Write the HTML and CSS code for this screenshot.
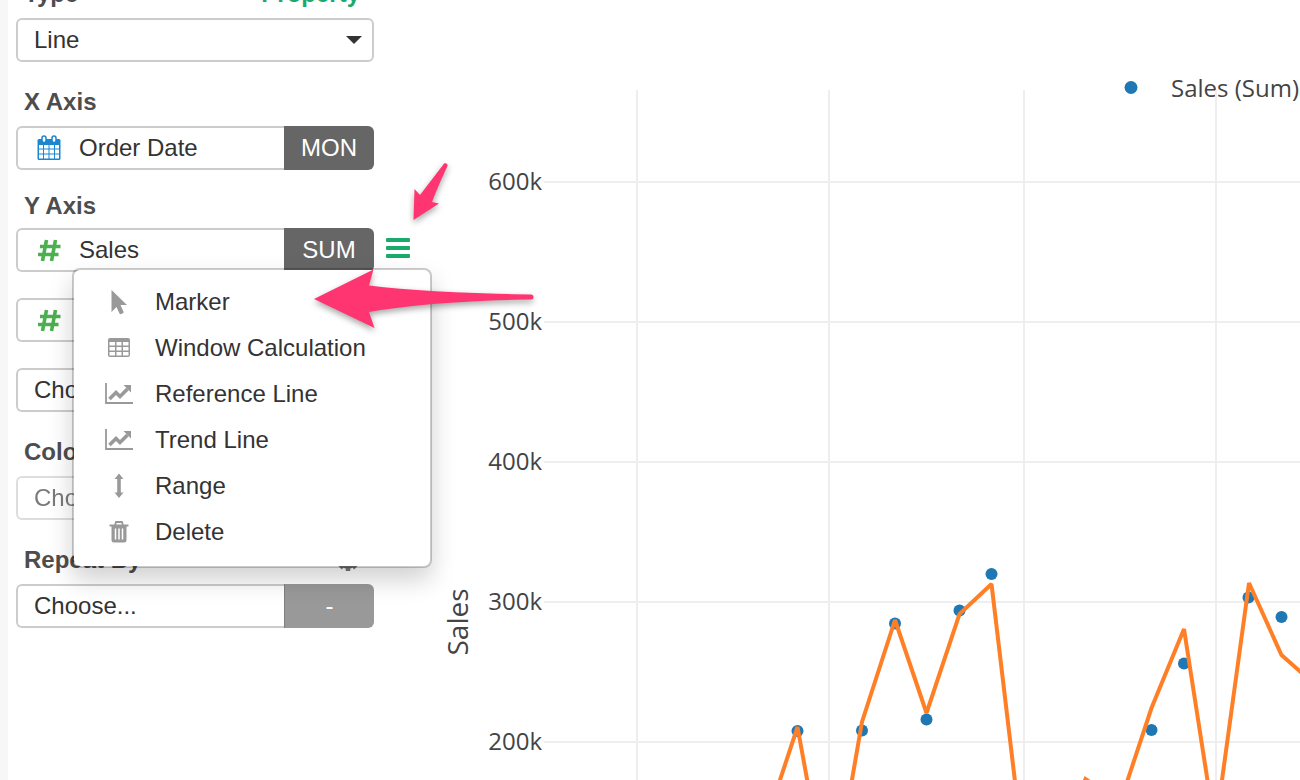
FILE: index.html
```html
<!DOCTYPE html>
<html lang="en">
<head>
<meta charset="utf-8">
<title>Chart settings</title>
<link rel="stylesheet" href="styles.css">
</head>
<body>
<svg class="defs" aria-hidden="true">
  <symbol id="i-hash" viewBox="0 0 24 24"><path d="M9.500 2L5.500 23M18.500 2L14.500 23M3 8.500H23.500M1 16.500H21.500" fill="none" stroke="currentColor" stroke-width="3.600"/></symbol>
  <symbol id="i-trend" viewBox="0 0 28 22"><path d="M1 0V20H28" fill="none" stroke="currentColor" stroke-width="1.800"/><path d="M4.500 16L11 9.500L15 13.500L22.500 6" fill="none" stroke="currentColor" stroke-width="3.600"/><path d="M18.500 2H26V9.500Z" fill="currentColor"/></symbol>
</svg>
<main class="app">
  <form class="panel">
    <div class="head">
      <label class="label" for="type">Type</label>
      <a class="property" href="#">Property</a>
    </div>
    <div class="field">
      <select class="value" id="type"><option>Line</option></select>
      <svg class="caret" viewBox="0 0 16 8" aria-hidden="true"><path d="M0 0H16L8 8Z"/></svg>
    </div>

    <div class="head"><span class="label">X Axis</span></div>
    <div class="field">
      <button class="value" type="button">
        <svg class="icon blue" viewBox="0 0 24 24" aria-hidden="true">
          <path d="M2 3H22Q23.500 3 23.500 4.500V22.500Q23.500 24 22 24H2Q.5 24 .5 22.500V4.500Q.5 3 2 3Z" fill="currentColor"/>
          <path d="M2 9H6V12.500H2ZM7 9H11.500V12.500H7ZM12.500 9H17V12.500H12.500ZM18 9H22V12.500H18ZM2 13.500H6V17.500H2ZM7 13.500H11.500V17.500H7ZM12.500 13.500H17V17.500H12.500ZM18 13.500H22V17.500H18ZM2 18.500H6V22.500H2ZM7 18.500H11.500V22.500H7ZM12.500 18.500H17V22.500H12.500ZM18 18.500H22V22.500H18Z" fill="#fff"/>
          <rect x="5" y="0" width="4" height="6.500" rx="2" fill="#fff" stroke="currentColor" stroke-width="1.500"/>
          <rect x="15" y="0" width="4" height="6.500" rx="2" fill="#fff" stroke="currentColor" stroke-width="1.500"/>
        </svg>
        Order Date
      </button>
      <button class="agg" type="button">MON</button>
    </div>

    <div class="head head-y"><span class="label">Y Axis</span></div>
    <div class="field">
      <button class="value" type="button"><svg class="icon green" aria-hidden="true"><use href="#i-hash"/></svg>Sales</button>
      <button class="agg" type="button">SUM</button>
      <button class="burger" type="button" aria-label="Series menu"><i></i><i></i><i></i></button>
      <div class="menu" role="menu">
        <button class="item" type="button" role="menuitem">
          <svg class="mark" viewBox="0 0 28 28" aria-hidden="true"><path d="M6.500 2V24L11.500 19L14.500 25.500Q15 26.500 16 26L18 25.200Q19 24.800 18.500 23.800L15.500 17H22Z" fill="currentColor"/></svg>
          Marker
        </button>
        <button class="item" type="button" role="menuitem">
          <svg class="mark" viewBox="0 0 28 28" aria-hidden="true"><rect x="3" y="4" width="22" height="19" rx="2" fill="currentColor"/><path d="M4.500 8H10V11.500H4.500ZM11.500 8H16.500V11.500H11.500ZM18 8H23.500V11.500H18ZM4.500 13H10V16.500H4.500ZM11.500 13H16.500V16.500H11.500ZM18 13H23.500V16.500H18ZM4.500 18H10V21.500H4.500ZM11.500 18H16.500V21.500H11.500ZM18 18H23.500V21.500H18Z" fill="#fff"/></svg>
          Window Calculation
        </button>
        <button class="item" type="button" role="menuitem"><svg class="mark" aria-hidden="true"><use href="#i-trend"/></svg>Reference Line</button>
        <button class="item" type="button" role="menuitem"><svg class="mark" aria-hidden="true"><use href="#i-trend"/></svg>Trend Line</button>
        <button class="item" type="button" role="menuitem">
          <svg class="mark" viewBox="0 0 28 28" aria-hidden="true"><path d="M14 1.500L18.500 7H15.800V20.500H18.500L14 26L9.500 20.500H12.200V7H9.500Z" fill="currentColor"/></svg>
          Range
        </button>
        <button class="item" type="button" role="menuitem">
          <svg class="mark" viewBox="0 0 28 28" aria-hidden="true"><path d="M4.500 7.500H23.500M10 7.500L11 4H17L18 7.500" fill="none" stroke="currentColor" stroke-width="1.800"/><path d="M6.500 7H21.500V22Q21.500 24.500 19 24.500H9Q6.500 24.500 6.500 22Z" fill="currentColor"/><path d="M10.500 10.500V21.500M14 10.500V21.500M17.500 10.500V21.500" stroke="#fff" stroke-width="1.500"/></svg>
          Delete
        </button>
      </div>
    </div>
    <div class="field stacked">
      <button class="value" type="button"><svg class="icon green" aria-hidden="true"><use href="#i-hash"/></svg></button>
      <button class="agg" type="button">SUM</button>
    </div>
    <div class="field stacked">
      <button class="value" type="button">Choose...</button>
      <button class="agg muted" type="button">-</button>
    </div>

    <div class="head"><span class="label">Color By</span></div>
    <div class="field faded">
      <button class="value" type="button">Choose...</button>
      <button class="agg muted" type="button">-</button>
    </div>

    <div class="head">
      <span class="label">Repeat By</span>
      <svg class="gear" viewBox="0 0 24 24" aria-hidden="true"><circle cx="12" cy="12" r="6.500" fill="none" stroke="currentColor" stroke-width="5"/><path d="M12 1V5M12 19V23M1 12H5M19 12H23M4.200 4.200L7 7M17 17L19.800 19.800M19.800 4.200L17 7M4.200 19.800L7 17" stroke="currentColor" stroke-width="4.500"/></svg>
    </div>
    <div class="field">
      <button class="value" type="button">Choose...</button>
      <button class="agg muted" type="button">-</button>
    </div>
  </form>

  <svg class="chart" viewBox="440 0 860 780" preserveAspectRatio="xMinYMin slice" role="img" aria-label="Sales by order date">
    <g class="ticks"><text x="1299" y="97">Sales (Sum)</text></g>
    <g class="grid">
      <path d="M544 182H1300M544 322H1300M544 462H1300M544 602H1300M544 742H1300"/>
      <path d="M637 90V780M829 90V780M1024 90V780M1216 90V780"/>
    </g>
    <g class="dots">
      <circle cx="797.500" cy="731" r="6"/><circle cx="862" cy="730.500" r="6"/><circle cx="895" cy="623.500" r="6"/><circle cx="926.500" cy="719.500" r="6"/><circle cx="959.500" cy="610.500" r="6"/><circle cx="991.500" cy="574" r="6"/><circle cx="1151.500" cy="730" r="6"/><circle cx="1184" cy="663.500" r="6"/><circle cx="1248.500" cy="597.500" r="6"/><circle cx="1281.500" cy="617" r="6"/>
      <circle cx="1131" cy="87.500" r="6.500"/>
    </g>
    <path class="line" d="M765 820L780 780L797.500 727L809 790L830 880L845 820L862 722L895 620L926.500 713L959.500 614L991.500 584L1016 790L1040 880L1060 840L1085.500 779L1110 796L1118 810L1127 782L1151.500 708L1184 629L1209 790L1216 840L1222 780L1249 583L1281.500 655L1312 682"/>
    <g class="ticks">
      <text x="542" y="190">600k</text><text x="542" y="330">500k</text><text x="542" y="470">400k</text><text x="542" y="610">300k</text><text x="542" y="750">200k</text>
    </g>
    <text class="title" transform="translate(468 622) rotate(-90)">Sales</text>
  </svg>

  <svg class="arrows" viewBox="0 0 240 180" aria-hidden="true">
    <path d="M141.500 70L142.500 39L148 45Q158 32 171 15A1.500 1.500 0 0 1 175.500 16Q166 36 160 52L167 53.500Z"/>
    <path d="M42 149L101.500 119.500L97 135.500Q158 143 259 144.500A2.200 2.200 0 0 1 259 149.500Q158 151 97 162L102.500 178Z"/>
  </svg>
</main>
</body>
</html>
```
FILE: styles.css
```css
* { box-sizing: border-box; }
body { margin: 0; background: #fff; color: #333; font: 24px/28px "Liberation Sans", Arial, sans-serif; }
button, select { font: inherit; color: inherit; background: none; border: 0; margin: 0; padding: 0; text-align: left; }
.defs { position: absolute; width: 0; height: 0; }
.app { position: relative; display: flex; height: 100vh; overflow: hidden; border-left: 8px solid #f7f7f7; }

.panel { flex: none; width: 366px; margin-top: -46px; padding-left: 8px; }
.head { display: flex; justify-content: space-between; align-items: center; height: 64px; padding: 26px 14px 10px 8px; }
.head-y { height: 58px; padding-top: 22px; padding-bottom: 8px; }
.label { color: #4d4d4d; font-weight: bold; }
.property { color: #1aaa6b; font-weight: bold; text-decoration: none; }
.gear { width: 24px; height: 24px; color: #777; }

.field { position: relative; display: flex; height: 44px; }
.stacked { margin-top: 26px; }
.faded { opacity: 0.65; }
.value { flex: 1; display: flex; align-items: center; gap: 18px; padding: 0 16px; border: 2px solid #ccc; border-radius: 6px; appearance: none; }
.value:not(:last-child):not(select) { border-right: 0; border-radius: 6px 0 0 6px; }
.icon { width: 24px; height: 24px; margin-left: 3px; overflow: visible; }
.blue { color: #1a87d0; }
.green { color: #4caf50; }
.caret { position: absolute; right: 12px; top: 18px; width: 16px; height: 8px; fill: #333; }
.agg { width: 90px; border-radius: 0 6px 6px 0; background: #666; color: #fff; text-align: center; }
.muted { background: #999; border-left: 1px solid #808080; }
.burger { position: absolute; left: 370px; top: 10px; width: 24px; display: grid; gap: 4px; }
.burger i { height: 4px; border-radius: 1px; background: #1aaa6b; }

.menu { position: absolute; z-index: 2; left: 56px; top: 40px; width: 360px; padding: 9px 0 11px; border: 2px solid rgba(0, 0, 0, 0.2); border-radius: 8px; background: #fff; background-clip: padding-box; box-shadow: 0 12px 24px rgba(0, 0, 0, 0.18); }
.item { display: flex; align-items: center; gap: 22px; width: 100%; height: 46px; padding: 0 31px; white-space: nowrap; }
.mark { flex: none; width: 28px; height: 28px; color: #999; }

.chart { flex: 1; min-width: 0; height: 780px; margin-left: 66px; overflow: visible; }
.grid { fill: none; stroke: #eee; stroke-width: 2; }
.dots { fill: #1f77b4; }
.line { fill: none; stroke: #ff7f26; stroke-width: 4; stroke-miterlimit: 2; }
.ticks, .title { fill: #444; font: 24px "Open Sans", sans-serif; text-anchor: end; }
.title { font-size: 28px; text-anchor: middle; }

.arrows { position: absolute; z-index: 3; left: 264px; top: 150px; width: 240px; height: 180px; overflow: visible; fill: #ff3571; filter: drop-shadow(0 3px 3px rgba(0, 0, 0, 0.35)); }
```
